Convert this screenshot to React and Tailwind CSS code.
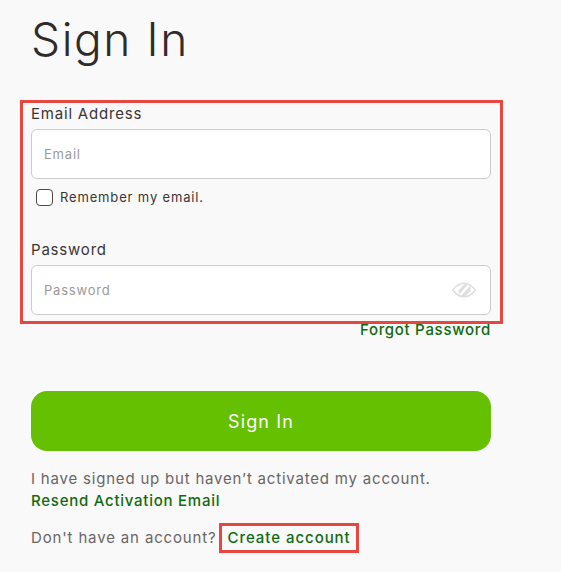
const font = "font-['Inter','Noto_Sans',sans-serif]";

function EyeOff() {
  return (
    <svg viewBox="0 0 24 16" className="w-6 h-4 text-[#dedede]" fill="none">
      <path d="M0.8 8C4 3.6 7.8 1.2 12 1.2S20 3.6 23.2 8C20 12.4 16.2 14.8 12 14.8S4 12.4 0.8 8Z" stroke="currentColor" strokeWidth="1.4" />
      <path d="M6.2 9L13 1.5H16.5L7.5 12ZM9 14L18.5 3.5L18.5 9L13 14.5Z" fill="currentColor" />
    </svg>
  );
}

export default function App() {
  return (
    <div className={`${font} min-h-[572px] bg-[#f9f9f9] pl-[20px] text-[#333333] tracking-[0.8px]`}>
      <h1 className="pl-[11px] pt-[11px] text-[46px] leading-[56px] font-light text-[#2f2b2b] tracking-[1.6px]">Sign In</h1>

      <div className="mt-[33px] w-[483px] h-[224px] border-[3px] border-[#e8473f] pl-2 pr-[9px]">
        <label className="block pt-px text-[15px] leading-[20px] text-[#3a3535]">Email Address</label>
        <div className="mt-[5px] h-[50px] rounded-md border border-[#cccccc] bg-white flex items-center px-3">
          <span className="pt-[2px] text-[13px] text-[#9a9a9a]">Email</span>
        </div>
        <div className="mt-[9px] flex items-center pl-[5px]">
          <span className="w-[17px] h-[17px] rounded-[4px] border border-[#4a4a4a] bg-white" />
          <span className="ml-[7px] text-[13px] tracking-[0.85px] text-[#3a3535]">Remember my email.</span>
        </div>
        <label className="mt-[32px] block text-[15px] leading-[20px] text-[#3a3535]">Password</label>
        <div className="mt-[5px] h-[50px] rounded-md border border-[#cccccc] bg-white flex items-center justify-between pl-3 pr-[14px]">
          <span className="pt-[2px] text-[13px] text-[#9a9a9a]">Password</span>
          <EyeOff />
        </div>
      </div>

      <div className="w-[471px] text-right text-[15px] leading-[20px] font-medium tracking-[0.7px] text-[#0f6b0f] -mt-[4px]">
        Forgot Password
      </div>

      <button className="mt-[51px] ml-[11px] w-[460px] h-[60px] rounded-2xl bg-[#64c000] text-white text-[18px] tracking-[1.1px]">
        Sign In
      </button>

      <p className="mt-[17px] ml-[11px] text-[15px] leading-[22px] text-[#6b6565]">
        I have signed up but haven’t activated my account.
      </p>
      <div className="ml-[11px] mt-px text-[15px] leading-[20px] font-medium tracking-[0.75px] text-[#0f6b0f]">Resend Activation Email</div>

      <div className="mt-[12px] ml-[11px] flex items-center text-[15px] text-[#6b6565] tracking-[0.85px]">
        <span>Don't have an account?</span>
        <span className="ml-[2px] h-[30px] pl-[6px] pr-[5px] flex items-center border-[3px] border-[#e8473f] font-medium tracking-[0.95px] text-[#0f6b0f]">Create account</span>
      </div>
    </div>
  );
}
